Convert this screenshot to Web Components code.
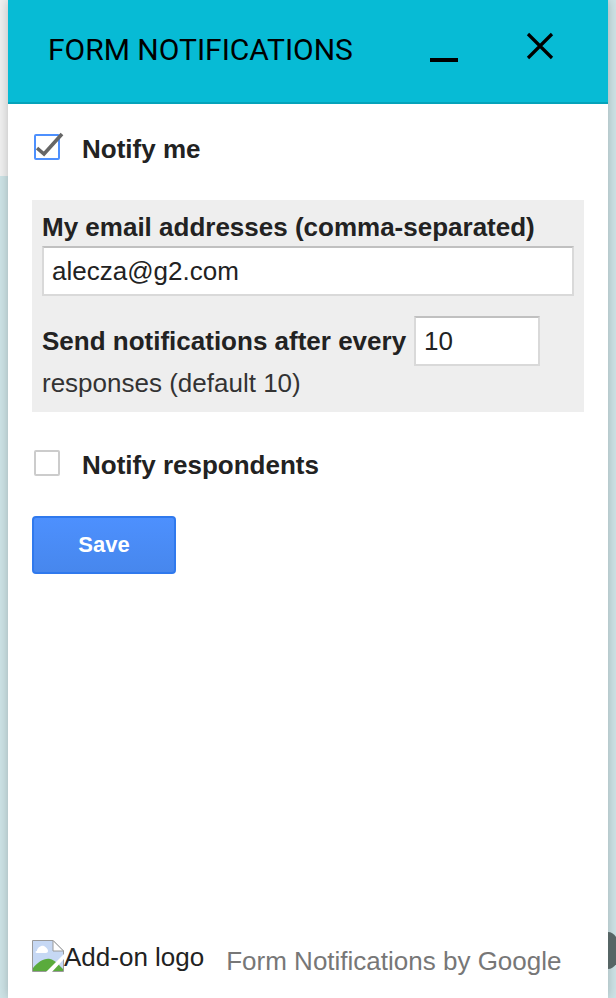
<!DOCTYPE html>
<html>
<head>
<meta charset="utf-8">
<title>Form Notifications</title>
<style>
    html, body {
        margin: 0;
        height: 100%;
    }
    body {
        overflow: hidden;
        font-family: "Liberation Sans", Arial, sans-serif;
        color: #222;
        background: #cde3e6;
    }
</style>
</head>
<body>
<addon-dialog>
    <dialog-titlebar slot="title">FORM NOTIFICATIONS</dialog-titlebar>

    <check-row checked>Notify me</check-row>

    <grey-panel>
        <text-box wide label="My email addresses (comma-separated)">alecza@g2.com</text-box>
        <count-row label="Send notifications after every" value="10">responses (default 10)</count-row>
    </grey-panel>

    <check-row class="second">Notify respondents</check-row>

    <blue-button>Save</blue-button>

    <dialog-footer slot="footer">Form Notifications by Google</dialog-footer>
</addon-dialog>

<script>
class AddonDialog extends HTMLElement {
    constructor() {
        super();
        this.attachShadow({mode: 'open'});
        this.shadowRoot.innerHTML = `
        <style>
            :host {
                display: block;
                position: relative;
                height: 998px;
                padding: 0 8px;
                box-sizing: border-box;
                background: linear-gradient(#f0f0f0, #f0f0f0) 0 0 / 8px 176px no-repeat;
            }
            .box {
                height: 100%;
                display: flex;
                flex-direction: column;
                background: #fff;
                box-shadow: 0 0 10px rgba(0, 0, 0, .22);
            }
            .content {
                flex: 1;
                padding: 0 24px;
            }
            .tab {
                position: absolute;
                right: -4px;
                top: 932px;
                width: 12px;
                height: 37px;
                border-radius: 0 100% 100% 0 / 0 50% 50% 0;
                background: #566565;
            }
        </style>
        <div class="tab"></div>
        <div class="box">
            <slot name="title"></slot>
            <div class="content"><slot></slot></div>
            <slot name="footer"></slot>
        </div>`;
    }
}

class DialogTitlebar extends HTMLElement {
    constructor() {
        super();
        this.attachShadow({mode: 'open'});
        this.shadowRoot.innerHTML = `
        <style>
            :host {
                display: flex;
                align-items: flex-start;
                height: 102px;
                background: #07bbd5;
                border-bottom: 2px solid #05a3ba;
                color: #000;
            }
            .name {
                flex: 1;
                margin: 32px 0 0 40px;
                font: 400 30px/36px Roboto, sans-serif;
            }
            svg {
                display: block;
            }
            .min {
                margin: 58px 0 0;
            }
            .close {
                margin: 32px 54px 0 68px;
            }
        </style>
        <div class="name"><slot></slot></div>
        <svg class="min" width="28" height="4"><rect width="28" height="4" fill="#000"/></svg>
        <svg class="close" width="28" height="28" viewBox="0 0 28 28">
            <path d="M2 2 L26 26 M26 2 L2 26" stroke="#000" stroke-width="3.2" fill="none"/>
        </svg>`;
    }
}

class CheckRow extends HTMLElement {
    constructor() {
        super();
        this.attachShadow({mode: 'open'});
        let tick = this.hasAttribute('checked');
        this.shadowRoot.innerHTML = `
        <style>
            :host {
                display: flex;
                align-items: center;
                gap: 22px;
                height: 36px;
                margin-top: 27px;
                padding-left: 2px;
                font: 700 26px/36px "Liberation Sans", Arial, sans-serif;
                color: #222;
            }
            :host(.second) {
                margin-top: 35px;
            }
            .mark {
                position: relative;
                box-sizing: border-box;
                width: 26px;
                height: 26px;
                margin-bottom: 4px;
                border: 2px solid ${tick ? '#4d90fe' : '#ccc'};
                border-radius: 2px;
                background: #fff;
            }
            svg {
                position: absolute;
                left: 0;
                top: -6px;
            }
        </style>
        <div class="mark">${tick ? `<svg width="28" height="28" viewBox="0 0 28 28">
            <path d="M1 18 L8 24 L26 4" stroke="#666" stroke-width="3.6" fill="none"/>
        </svg>` : ''}</div>
        <div><slot></slot></div>`;
    }
}

class GreyPanel extends HTMLElement {
    constructor() {
        super();
        this.attachShadow({mode: 'open'});
        this.shadowRoot.innerHTML = `
        <style>
            :host {
                display: block;
                margin-top: 33px;
                padding: 9px 10px 11px;
                height: 192px;
                background: #eee;
            }
        </style>
        <slot></slot>`;
    }
}

class TextBox extends HTMLElement {
    constructor() {
        super();
        this.attachShadow({mode: 'open'});
        this.shadowRoot.innerHTML = `
        <style>
            :host {
                display: block;
            }
            .label {
                height: 37px;
                font: 700 26px/36px "Liberation Sans", Arial, sans-serif;
                color: #222;
            }
            .field {
                box-sizing: border-box;
                height: 50px;
                padding: 0 8px;
                background: #fff;
                border: 2px solid #d9d9d9;
                border-top-color: #c0c0c0;
                font: 400 26px/46px "Liberation Sans", Arial, sans-serif;
                color: #222;
            }
        </style>
        <div class="label">${this.getAttribute('label')}</div>
        <div class="field"><slot></slot></div>`;
    }
}

class CountRow extends HTMLElement {
    constructor() {
        super();
        this.attachShadow({mode: 'open'});
        this.shadowRoot.innerHTML = `
        <style>
            :host {
                display: block;
                margin-top: 20px;
                font: 400 26px/36px "Liberation Sans", Arial, sans-serif;
                color: #333;
            }
            .line {
                display: flex;
                align-items: center;
                gap: 8px;
                height: 50px;
            }
            b {
                color: #222;
                white-space: nowrap;
            }
            .field {
                box-sizing: border-box;
                width: 126px;
                height: 50px;
                padding: 0 8px;
                background: #fff;
                border: 2px solid #d9d9d9;
                border-top-color: #c0c0c0;
                line-height: 46px;
                color: #222;
            }
            .after {
                margin-top: -1px;
            }
        </style>
        <div class="line">
            <b>${this.getAttribute('label')}</b>
            <div class="field">${this.getAttribute('value')}</div>
        </div>
        <div class="after"><slot></slot></div>`;
    }
}

class BlueButton extends HTMLElement {
    constructor() {
        super();
        this.attachShadow({mode: 'open'});
        this.shadowRoot.innerHTML = `
        <style>
            :host {
                display: flex;
                align-items: center;
                justify-content: center;
                box-sizing: border-box;
                width: 144px;
                height: 58px;
                margin-top: 33px;
                background: linear-gradient(#4d90fe, #4787ed);
                border: 2px solid #3079ed;
                border-radius: 4px;
                font: 700 22px/1 "Liberation Sans", Arial, sans-serif;
                color: #fff;
            }
        </style>
        <slot></slot>`;
    }
}

class BrokenImage extends HTMLElement {
    constructor() {
        super();
        this.attachShadow({mode: 'open'});
        this.shadowRoot.innerHTML = `
        <style>
            :host {
                display: block;
                width: 32px;
                height: 32px;
            }
            svg {
                display: block;
            }
        </style>
        <svg width="32" height="32" viewBox="0 0 32 32">
            <path d="M.5.5 H21 L31.5 11 V31.5 H.5 Z" fill="#c6d8f4" stroke="#9a9a9a"/>
            <path d="M21 .5 V11 H31.5 Z" fill="#fff" stroke="#9a9a9a"/>
            <path d="M5 11 C5 8 9 5 12 6 C14 7 16 9 16 11 C16 13 14 13 12 13 H5 C3 13 3 11 5 11 Z" fill="#fff"/>
            <path d="M1 31 V28 C6 22 12 18 18 19 C23 20 27 25 31 29 V31 Z" fill="#5aab3c"/>
            <path d="M13 33 L32 14 V19 L19 33 Z" fill="#fff"/>
        </svg>`;
    }
}

class DialogFooter extends HTMLElement {
    constructor() {
        super();
        this.attachShadow({mode: 'open'});
        this.shadowRoot.innerHTML = `
        <style>
            :host {
                display: flex;
                align-items: flex-start;
                height: 58px;
                padding-left: 24px;
                font: 400 26px/36px "Liberation Sans", Arial, sans-serif;
            }
            .logo {
                display: flex;
                align-items: flex-start;
                color: #222;
            }
            .logo span {
                margin-top: -1px;
            }
            .by {
                margin: 3px 0 0 22px;
                color: #777;
            }
        </style>
        <div class="logo"><broken-image></broken-image><span>Add-on logo</span></div>
        <div class="by"><slot></slot></div>`;
    }
}

customElements.define('addon-dialog', AddonDialog);
customElements.define('dialog-titlebar', DialogTitlebar);
customElements.define('check-row', CheckRow);
customElements.define('grey-panel', GreyPanel);
customElements.define('text-box', TextBox);
customElements.define('count-row', CountRow);
customElements.define('blue-button', BlueButton);
customElements.define('broken-image', BrokenImage);
customElements.define('dialog-footer', DialogFooter);
</script>
</body>
</html>
